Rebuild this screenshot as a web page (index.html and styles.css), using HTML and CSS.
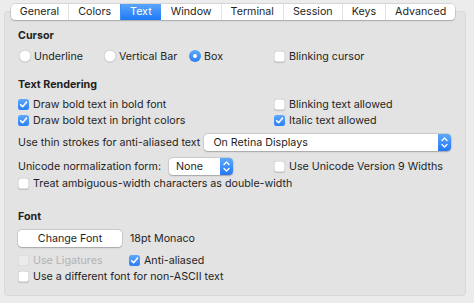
FILE: index.html
```html
<!DOCTYPE html>
<html>
<head>
<meta charset="utf-8">
<link rel="stylesheet" href="styles.css">
</head>
<body>
<div class="window">
  <div class="tabs">
    <div class="tab">General</div>
    <div class="tab">Colors</div>
    <div class="tab sel">Text</div>
    <div class="tab">Window</div>
    <div class="tab">Terminal</div>
    <div class="tab">Session</div>
    <div class="tab">Keys</div>
    <div class="tab">Advanced</div>
  </div>
  <div class="panel">
    <div class="h">Cursor</div>
    <div class="row two r-radios">
      <div class="radios">
        <label class="opt"><span class="radio"></span>Underline</label>
        <label class="opt"><span class="radio"></span>Vertical Bar</label>
        <label class="opt"><span class="radio on"></span>Box</label>
      </div>
      <label class="opt"><span class="cb"></span>Blinking cursor</label>
    </div>

    <div class="h h-tr">Text Rendering</div>
    <div class="row two r-first">
      <label class="opt"><span class="cb on"><svg viewBox="0 0 11 11"><path d="M2.6 5.7 L4.6 7.7 L8.4 3.2"/></svg></span>Draw bold text in bold font</label>
      <label class="opt"><span class="cb"></span>Blinking text allowed</label>
    </div>
    <div class="row two">
      <label class="opt"><span class="cb on"><svg viewBox="0 0 11 11"><path d="M2.6 5.7 L4.6 7.7 L8.4 3.2"/></svg></span>Draw bold text in bright colors</label>
      <label class="opt"><span class="cb on"><svg viewBox="0 0 11 11"><path d="M2.6 5.7 L4.6 7.7 L8.4 3.2"/></svg></span>Italic text allowed</label>
    </div>
    <div class="prow r-thin">
      <span>Use thin strokes for anti-aliased text</span>
      <div class="popup wide">
        <span class="val">On Retina Displays</span>
        <span class="step"><svg viewBox="0 0 13 17"><path d="M4 6.5 L6.5 4 L9 6.5 M4 10.5 L6.5 13 L9 10.5"/></svg></span>
      </div>
    </div>
    <div class="prow two r-norm">
      <div class="normcell">
        <span>Unicode normalization form:</span>
        <div class="popup small">
          <span class="val">None</span>
          <span class="step"><svg viewBox="0 0 13 17"><path d="M4 6.5 L6.5 4 L9 6.5 M4 10.5 L6.5 13 L9 10.5"/></svg></span>
        </div>
      </div>
      <label class="opt"><span class="cb"></span>Use Unicode Version 9 Widths</label>
    </div>
    <div class="row">
      <label class="opt"><span class="cb"></span>Treat ambiguous-width characters as double-width</label>
    </div>

    <div class="h h-font">Font</div>
    <div class="brow">
      <button class="btn">Change Font</button>
      <span class="fontname">18pt Monaco</span>
    </div>
    <div class="row lig">
      <label class="opt dis"><span class="cb"></span>Use Ligatures</label>
      <label class="opt"><span class="cb on"><svg viewBox="0 0 11 11"><path d="M2.6 5.7 L4.6 7.7 L8.4 3.2"/></svg></span>Anti-aliased</label>
    </div>
    <div class="row">
      <label class="opt"><span class="cb"></span>Use a different font for non-ASCII text</label>
    </div>
  </div>
</div>
</body>
</html>
```

FILE: styles.css
```css
html, body {
  margin: 0;
  padding: 0;
}
body {
  background: #ececec;
  font-family: Inter, "Liberation Sans", sans-serif;
  font-size: 10.7px;
  color: #1f1f1f;
}
.window {
  height: 303px;
  box-sizing: border-box;
  padding: 4px 8px 7px 4px;
  display: flex;
  flex-direction: column;
}
.tabs {
  align-self: center;
  margin-right: 4px;
  display: flex;
  height: 16px;
  background: #fff;
  border-radius: 4px;
  box-shadow: 0 0 0 0.5px rgba(0,0,0,0.18), 0 1px 1.5px rgba(0,0,0,0.18);
  position: relative;
  z-index: 1;
  margin-bottom: -9px;
  overflow: hidden;
}
.tab {
  padding: 0 9px;
  line-height: 16px;
  border-left: 1px solid #e2e2e2;
}
.tab:first-child {
  border-left: none;
}
.tab.sel {
  background: linear-gradient(#5aa5fb, #1f7af6);
  color: #fff;
  border-left-color: #3d8ef7;
}
.tab.sel + .tab {
  border-left-color: transparent;
}
.panel {
  flex: 1;
  background: #e3e3e3;
  border: 1px solid #d8d8d8;
  border-radius: 4px;
  padding: 17px 14px 0 13px;
}
.h {
  font-weight: bold;
  height: 14px;
  line-height: 14px;
}
.h-tr {
  margin-top: 14px;
}
.h-font {
  margin-top: 19px;
}
.row {
  height: 16px;
  display: flex;
  align-items: center;
}
.two {
  display: grid;
  grid-template-columns: 256px auto;
  align-items: center;
}
.r-radios {
  margin-top: 5px;
}
.r-first {
  margin-top: 4px;
}
.radios {
  display: grid;
  grid-template-columns: 85px 85px 85px;
  padding-left: 1px;
}
.opt {
  display: flex;
  align-items: center;
  white-space: nowrap;
}
.cb {
  width: 11px;
  height: 11px;
  box-sizing: border-box;
  border-radius: 2.5px;
  background: #fff;
  box-shadow: inset 0 0 0 0.5px rgba(0,0,0,0.22), 0 0.5px 1px rgba(0,0,0,0.15);
  margin-right: 4px;
  flex: none;
  display: flex;
}
.cb.on {
  background: linear-gradient(#5ea8fb, #2b80f6);
  box-shadow: none;
}
.cb svg {
  width: 11px;
  height: 11px;
}
.cb svg path {
  fill: none;
  stroke: #fff;
  stroke-width: 1.6;
  stroke-linecap: round;
  stroke-linejoin: round;
}
.radio {
  width: 12px;
  height: 12px;
  border-radius: 50%;
  background: #fff;
  box-shadow: inset 0 0 0 0.5px rgba(0,0,0,0.22), 0 0.5px 1px rgba(0,0,0,0.15);
  margin-right: 3px;
  flex: none;
  position: relative;
}
.radio.on {
  background: linear-gradient(#5ea8fb, #2b80f6);
  box-shadow: none;
}
.radio.on::after {
  content: "";
  position: absolute;
  left: 4px;
  top: 4px;
  width: 4px;
  height: 4px;
  border-radius: 50%;
  background: #fff;
}
.prow {
  height: 17px;
  display: flex;
  align-items: center;
}
.prow.two {
  display: grid;
}
.r-thin {
  margin-top: 6px;
}
.r-norm {
  margin-top: 7px;
}
.normcell {
  display: flex;
  align-items: center;
}
.popup {
  height: 17px;
  display: flex;
  align-items: center;
  background: #fff;
  border-radius: 4px;
  box-shadow: 0 0 0 0.5px rgba(0,0,0,0.14), 0 0.5px 1.5px rgba(0,0,0,0.22);
  box-sizing: border-box;
}
.popup.wide {
  flex: 1;
  margin-left: 4px;
}
.popup.small {
  width: 64px;
  margin-left: 8px;
}
.popup .val {
  flex: 1;
  padding-left: 9px;
  white-space: nowrap;
}
.popup.small .val {
  padding-left: 7px;
}
.step {
  width: 13px;
  align-self: stretch;
  background: linear-gradient(#5ea8fb, #2478f5);
  border-radius: 0 4px 4px 0;
  display: flex;
}
.step svg {
  width: 13px;
  height: 17px;
}
.step svg path {
  fill: none;
  stroke: #fff;
  stroke-width: 1.3;
  stroke-linecap: round;
  stroke-linejoin: round;
}
.brow {
  margin-top: 6px;
  height: 17px;
  display: flex;
  align-items: center;
}
.btn {
  width: 104px;
  height: 17px;
  margin: 0;
  padding: 0;
  border: none;
  border-radius: 4px;
  background: #fff;
  box-shadow: 0 0 0 0.5px rgba(0,0,0,0.14), 0 0.5px 1.5px rgba(0,0,0,0.22);
  font-family: inherit;
  font-size: 10.7px;
  color: #1f1f1f;
}
.fontname {
  margin-left: 8px;
}
.lig {
  margin-top: 5px;
  display: grid;
  grid-template-columns: 111px auto;
}
.dis {
  color: #b2b2b2;
}
.dis .cb {
  background: #ebebeb;
  box-shadow: inset 0 0 0 0.5px rgba(0,0,0,0.1);
}
```
